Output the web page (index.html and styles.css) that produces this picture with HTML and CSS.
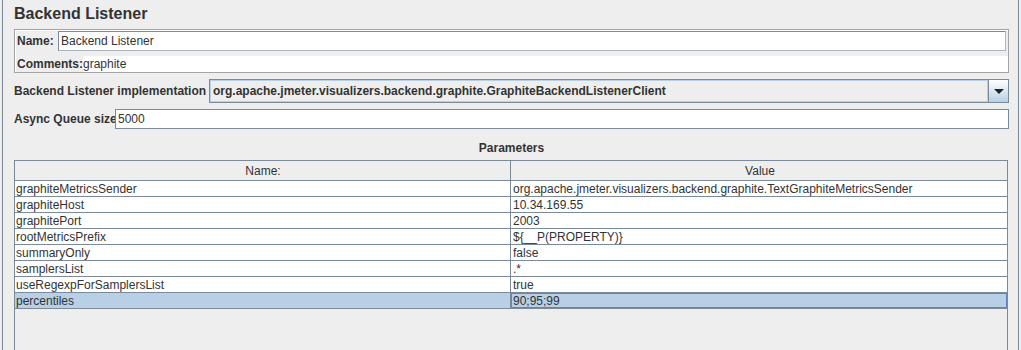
FILE: index.html
```html
<!DOCTYPE html>
<html lang="en">
<head>
  <meta charset="UTF-8" />
  <title>Backend Listener</title>
  <link rel="stylesheet" href="styles.css">
</head>
<body>

<div class="frame">
  <h1 class="title">Backend Listener</h1>

  <div class="info">
    <div class="info-row">
      <label class="name-label">Name:</label>
      <div class="field">Backend Listener</div>
    </div>
    <div class="info-row comments">
      <label>Comments:</label>
      <div class="comment-area">graphite</div>
    </div>
  </div>

  <div class="form-row impl">
    <label class="impl-label">Backend Listener implementation</label>
    <div class="combo">
      <div class="combo-value">org.apache.jmeter.visualizers.backend.graphite.GraphiteBackendListenerClient</div>
      <div class="combo-btn"><span class="arrow"></span></div>
    </div>
  </div>

  <div class="form-row queue">
    <label class="queue-label">Async Queue size</label>
    <div class="field">5000</div>
  </div>

  <div class="section-title">Parameters</div>

  <div class="params">
    <div class="prow head">
      <div class="cell">Name:</div>
      <div class="cell">Value</div>
    </div>
    <div class="prow">
      <div class="cell">graphiteMetricsSender</div>
      <div class="cell">org.apache.jmeter.visualizers.backend.graphite.TextGraphiteMetricsSender</div>
    </div>
    <div class="prow">
      <div class="cell">graphiteHost</div>
      <div class="cell">10.34.169.55</div>
    </div>
    <div class="prow">
      <div class="cell">graphitePort</div>
      <div class="cell">2003</div>
    </div>
    <div class="prow">
      <div class="cell">rootMetricsPrefix</div>
      <div class="cell">${__P(PROPERTY)}</div>
    </div>
    <div class="prow">
      <div class="cell">summaryOnly</div>
      <div class="cell">false</div>
    </div>
    <div class="prow">
      <div class="cell">samplersList</div>
      <div class="cell">.*</div>
    </div>
    <div class="prow">
      <div class="cell">useRegexpForSamplersList</div>
      <div class="cell">true</div>
    </div>
    <div class="prow selected">
      <div class="cell">percentiles</div>
      <div class="cell focus">90;95;99</div>
    </div>
  </div>
</div>

</body>
</html>
```

FILE: styles.css
```css
body {
  margin: 0;
  padding: 0;
  background: #eeeeee;
  color: #333333;
  font-family: 'Liberation Sans', Arial, sans-serif;
  font-size: 12px;
}
.frame {
  box-sizing: border-box;
  height: 350px;
  width: 1017px;
  margin-left: 2px;
  padding: 0 9px 0 11px;
  border-left: 1px solid #7a8a99;
  border-right: 1px solid #7a8a99;
  display: flex;
  flex-direction: column;
}
.title {
  margin: 0 0 5px 0;
  padding-top: 4px;
  font-size: 16px;
  line-height: 20px;
  font-weight: bold;
}
label {
  font-weight: bold;
  white-space: nowrap;
}
.info {
  border: 1px solid #a3a3a3;
  box-shadow: inset 1px 1px 0 #ffffff;
  padding: 1px 0 0 1px;
}
.info-row {
  display: flex;
  align-items: center;
  height: 20px;
  padding-right: 2px;
}
.info-row.comments {
  margin-top: 5px;
  height: 16px;
  padding-right: 0;
}
.name-label {
  width: 42px;
  padding-left: 1px;
  box-sizing: border-box;
}
.comments label {
  padding-left: 1px;
}
.field {
  flex: 1;
  box-sizing: border-box;
  height: 100%;
  background: #ffffff;
  border: 1px solid #7a8a99;
  border-right-color: #a8b4bf;
  border-bottom-color: #a8b4bf;
  padding-left: 2px;
  line-height: 18px;
}
.comment-area {
  flex: 1;
  height: 100%;
  background: #ffffff;
  line-height: 16px;
}
.form-row {
  display: flex;
  align-items: center;
}
.impl {
  margin-top: 6px;
  height: 24px;
}
.impl-label {
  width: 195px;
}
.combo {
  flex: 1;
  height: 100%;
  box-sizing: border-box;
  display: flex;
  border: 1px solid #7a8a99;
}
.combo-value {
  flex: 1;
  border: 1px solid #b8cfe5;
  padding-left: 2px;
  font-weight: bold;
  line-height: 20px;
  white-space: nowrap;
  overflow: hidden;
}
.combo-btn {
  width: 19px;
  border-left: 1px solid #7a8a99;
  background: linear-gradient(#ffffff, #b8cfe5);
  display: flex;
  align-items: center;
  justify-content: center;
}
.arrow {
  width: 0;
  height: 0;
  margin-top: 1px;
  border-left: 5px solid transparent;
  border-right: 5px solid transparent;
  border-top: 5px solid #222222;
}
.queue {
  margin-top: 6px;
  height: 20px;
}
.queue-label {
  width: 101px;
}
.queue .field {
  border-right-color: #7a8a99;
  border-bottom-color: #7a8a99;
}
.section-title {
  margin: 11px 0 4px;
  line-height: 16px;
  text-align: center;
  font-weight: bold;
}
.params {
  flex: 1;
  margin-right: 1px;
  border: 1px solid #7a8a99;
  border-bottom: none;
}
.prow {
  display: grid;
  grid-template-columns: 495px 1fr;
  height: 16px;
  box-sizing: border-box;
  background: #ffffff;
  border-bottom: 1px solid #7a8a99;
}
.prow.head {
  height: 20px;
  background: #eeeeee;
}
.head .cell {
  text-align: center;
  line-height: 20px;
}
.cell {
  padding-left: 1px;
  line-height: 16px;
  white-space: nowrap;
  overflow: hidden;
}
.cell + .cell {
  border-left: 1px solid #7a8a99;
  padding-left: 2px;
}
.prow.selected {
  background: #b8cfe5;
}
.focus {
  box-shadow: inset 0 0 0 1px #6382bf;
}
```
